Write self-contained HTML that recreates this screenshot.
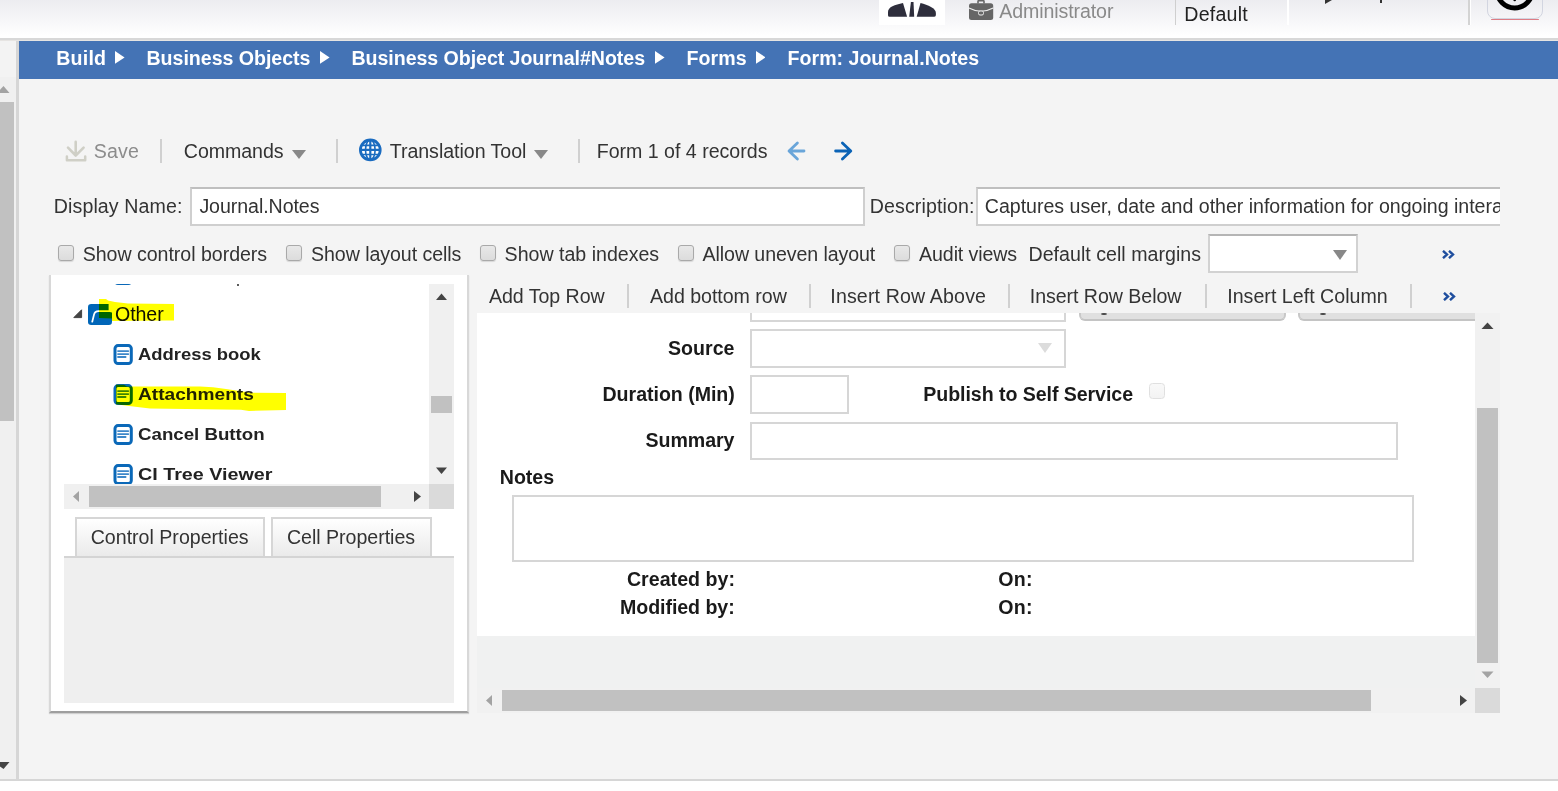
<!DOCTYPE html>
<html><head><meta charset="utf-8"><style>
html,body{margin:0;padding:0;}
body{width:1558px;height:791px;position:relative;overflow:hidden;background:#fff;font-family:"Liberation Sans",sans-serif;}
body div, body svg{position:absolute;}
.t{white-space:nowrap;}
</style></head><body>
<div style="left:0px;top:0px;width:1558px;height:38px;background:linear-gradient(#ececf0,#ffffff 95%)"></div>
<div style="left:0px;top:38px;width:1558px;height:2px;background:#d8d8d8"></div>
<div style="left:0px;top:40px;width:1558px;height:1px;background:#e6e4e2"></div>
<div style="left:879px;top:0px;width:66px;height:25px;background:#fff"></div>
<svg style="left:886px;top:0px" width="52" height="20" viewBox="0 0 52 20"><path d="M2 15.2 Q2 16.7 3.5 16.7 L21.1 16.7 L17 2.9 C9 5 2 6.5 2 12 Z" fill="#2e2e3c"/><path d="M23.2 16.7 L28.2 16.7 L27.5 2 L24.9 2 Z" fill="#2e2e3c"/><path d="M30.7 16.7 L48.3 16.7 Q49.9 16.7 49.9 15 L49.9 13 C49.9 8 42 5 34.5 2.9 Z" fill="#2e2e3c"/></svg>
<svg style="left:968px;top:0px" width="26" height="21" viewBox="0 0 26 21"><path d="M10 3.6 V1.6 Q10 0.6 11 0.6 H15 Q16 0.6 16 1.6 V3.6" fill="none" stroke="#666" stroke-width="1.6"/><rect x="1" y="3.3" width="24.2" height="16.7" rx="2.5" fill="#666"/><path d="M1 8 Q13 14.5 25.2 8" fill="none" stroke="#eee" stroke-width="1.1"/><rect x="10.5" y="11" width="5" height="4" rx="1.5" fill="#666" stroke="#eee" stroke-width="1"/></svg>
<div class="t" style="left:999.30px;top:2.00px;font-size:19.6px;line-height:19.6px;font-weight:400;color:#8a8a8a;letter-spacing:-0.108px;">Administrator</div>
<div style="left:1175px;top:0px;width:1px;height:25px;background:#cfcfcf"></div>
<div class="t" style="left:1184.30px;top:5.00px;font-size:19.6px;line-height:19.6px;font-weight:400;color:#222;letter-spacing:0.217px;">Default</div>
<div style="left:1287px;top:0px;width:2px;height:25px;background:#fff"></div>
<svg style="left:1325px;top:0px" width="10" height="5" viewBox="0 0 10 5"><path d="M0 0 L0 4 L7 0 Z" fill="#333"/></svg>
<div style="left:1380px;top:0px;width:2px;height:3px;background:#333"></div>
<div style="left:1468px;top:0px;width:2px;height:25px;background:#d3d3d3"></div>
<div style="left:1470px;top:0px;width:1px;height:25px;background:#fff"></div>
<div style="left:1487px;top:-10px;width:56px;height:29px;border:1.5px solid #d2d5e0;border-radius:8px;box-sizing:border-box;background:transparent"></div>
<div style="left:1491px;top:19px;width:48px;height:1px;background:#de7d85;border-radius:1px"></div>
<svg style="left:1494px;top:0px" width="42" height="14" viewBox="0 0 42 14"><circle cx="20.65" cy="-9.8" r="17.7" fill="none" stroke="#000" stroke-width="5"/><circle cx="20.7" cy="0" r="1.3" fill="#000"/></svg>
<div style="left:0px;top:41px;width:16px;height:738px;background:#f0f0f0"></div>
<div style="left:0px;top:41px;width:16px;height:36px;background:#f3f3f3"></div>
<svg style="left:0px;top:86px" width="10" height="7" viewBox="0 0 10 7"><path d="M-3 7 L3.5 0 L9.5 7 Z" fill="#a3a3a3"/></svg>
<div style="left:0px;top:102px;width:14px;height:319px;background:#c1c1c1"></div>
<svg style="left:0px;top:762px" width="10" height="8" viewBox="0 0 10 8"><path d="M-6 0 L9.5 0 L3.5 7 Z" fill="#444"/></svg>
<div style="left:16px;top:41px;width:3px;height:738px;background:#d6d6d6"></div>
<div style="left:19px;top:79px;width:1539px;height:700px;background:#f4f4f4"></div>
<div style="left:0px;top:779px;width:1558px;height:2px;background:#d6d6d6"></div>
<div style="left:0px;top:781px;width:1558px;height:10px;background:#fff"></div>
<div style="left:19px;top:41px;width:1539px;height:38px;background:#4473b5"></div>
<div class="t" style="left:56.30px;top:49.00px;font-size:19.6px;line-height:19.6px;font-weight:700;color:#fff;letter-spacing:0.175px;">Build</div>
<svg style="left:115px;top:51.3px" width="9.6" height="12.8" viewBox="0 0 9.6 12.8"><path d="M0 0 L9.6 6.4 L0 12.8 Z" fill="#fff"/></svg>
<div class="t" style="left:146.50px;top:49.00px;font-size:19.6px;line-height:19.6px;font-weight:700;color:#fff;letter-spacing:-0.033px;">Business Objects</div>
<svg style="left:320px;top:51.3px" width="9.6" height="12.8" viewBox="0 0 9.6 12.8"><path d="M0 0 L9.6 6.4 L0 12.8 Z" fill="#fff"/></svg>
<div class="t" style="left:351.50px;top:49.00px;font-size:19.6px;line-height:19.6px;font-weight:700;color:#fff;letter-spacing:-0.054px;">Business Object Journal#Notes</div>
<svg style="left:655px;top:51.3px" width="9.6" height="12.8" viewBox="0 0 9.6 12.8"><path d="M0 0 L9.6 6.4 L0 12.8 Z" fill="#fff"/></svg>
<div class="t" style="left:686.40px;top:49.00px;font-size:19.6px;line-height:19.6px;font-weight:700;color:#fff;letter-spacing:0.100px;">Forms</div>
<svg style="left:755.5px;top:51.3px" width="9.6" height="12.8" viewBox="0 0 9.6 12.8"><path d="M0 0 L9.6 6.4 L0 12.8 Z" fill="#fff"/></svg>
<div class="t" style="left:787.60px;top:49.00px;font-size:19.6px;line-height:19.6px;font-weight:700;color:#fff;letter-spacing:-0.006px;">Form: Journal.Notes</div>
<svg style="left:65px;top:140px" width="23" height="23" viewBox="0 0 23 23"><g fill="none" stroke="#cfcfc6" stroke-linecap="round" stroke-linejoin="round"><path d="M10.7 1.9 V15 M3 7.6 L10.7 15.5 L18.6 7.6" stroke-width="2.6"/><path d="M1.9 16.4 V20.2 H20.2 V16.4" stroke-width="2.5"/></g></svg>
<div class="t" style="left:93.70px;top:142.00px;font-size:19.6px;line-height:19.6px;font-weight:400;color:#8c8c8c;letter-spacing:0.167px;">Save</div>
<div style="left:160px;top:139px;width:2px;height:24px;background:#d0d0d0"></div>
<div class="t" style="left:183.80px;top:142.00px;font-size:19.6px;line-height:19.6px;font-weight:400;color:#333;letter-spacing:-0.057px;">Commands</div>
<svg style="left:291.5px;top:149.5px" width="14" height="9" viewBox="0 0 14 9"><path d="M0 0 L14 0 L7.0 9 Z" fill="#888"/></svg>
<div style="left:335.5px;top:139px;width:2.0px;height:24px;background:#d0d0d0"></div>
<svg style="left:358px;top:138px" width="25" height="25" viewBox="0 0 25 25"><circle cx="12.3" cy="11.9" r="9.5" fill="#fff"/><g fill="none" stroke="#1b6cc0"><circle cx="12.3" cy="11.9" r="9.9" stroke-width="2.8"/><path d="M12.3 2 V21.8 M2.4 11.9 H22.2" stroke-width="2.2"/><path d="M3 7.3 H21.6 M3 16.5 H21.6" stroke-width="1.7"/><ellipse cx="12.3" cy="11.9" rx="4.8" ry="10" stroke-width="1.6"/></g></svg>
<div class="t" style="left:389.70px;top:142.00px;font-size:19.6px;line-height:19.6px;font-weight:400;color:#333;letter-spacing:-0.033px;">Translation Tool</div>
<svg style="left:533.5px;top:149.5px" width="14" height="9" viewBox="0 0 14 9"><path d="M0 0 L14 0 L7.0 9 Z" fill="#888"/></svg>
<div style="left:577.5px;top:139px;width:2.0px;height:24px;background:#d0d0d0"></div>
<div class="t" style="left:596.70px;top:142.00px;font-size:19.6px;line-height:19.6px;font-weight:400;color:#333;letter-spacing:-0.011px;">Form 1 of 4 records</div>
<svg style="left:787px;top:141px" width="20" height="20" viewBox="0 0 20 20"><path d="M17 10 H2.2 M10.4 2 L2 10 L10.4 18" fill="none" stroke="#69a5d9" stroke-width="2.8" stroke-linecap="round" stroke-linejoin="round"/></svg>
<svg style="left:834px;top:141px" width="20" height="20" viewBox="0 0 20 20"><path d="M1.6 10 H16.6 M8.4 2 L16.8 10 L8.4 18" fill="none" stroke="#0b63b6" stroke-width="2.8" stroke-linecap="round" stroke-linejoin="round"/></svg>
<div class="t" style="left:53.80px;top:197.00px;font-size:19.6px;line-height:19.6px;font-weight:400;color:#333;letter-spacing:0.100px;">Display Name:</div>
<div style="left:190px;top:187px;width:675px;height:39px;background:#fff;border:2px solid #cfcfcf;border-top-color:#bfbfbf;box-sizing:border-box"></div>
<div class="t" style="left:199.40px;top:197.00px;font-size:19.6px;line-height:19.6px;font-weight:400;color:#333;letter-spacing:-0.067px;">Journal.Notes</div>
<div class="t" style="left:869.80px;top:197.00px;font-size:19.6px;line-height:19.6px;font-weight:400;color:#333;letter-spacing:0.100px;">Description:</div>
<div style="left:976px;top:187px;width:524px;height:39px;background:#fff;border:2px solid #cfcfcf;border-top-color:#bfbfbf;border-right:none;box-sizing:border-box;overflow:hidden">
<div class="t" style="left:6.80px;top:8.00px;font-size:19.6px;line-height:19.6px;font-weight:400;color:#333;letter-spacing:-0.026px;">Captures user, date and other information for ongoing interactions</div>
</div>
<div style="left:58px;top:245px;width:16px;height:16px;border:1px solid #a9a9a9;border-radius:3px;background:linear-gradient(#e8e8e8,#dcdcdc);box-shadow:0 1px 1px rgba(0,0,0,.12);box-sizing:border-box"></div>
<div class="t" style="left:82.70px;top:245.00px;font-size:19.6px;line-height:19.6px;font-weight:400;color:#333;letter-spacing:-0.037px;">Show control borders</div>
<div style="left:286.3px;top:245px;width:16.0px;height:16px;border:1px solid #a9a9a9;border-radius:3px;background:linear-gradient(#e8e8e8,#dcdcdc);box-shadow:0 1px 1px rgba(0,0,0,.12);box-sizing:border-box"></div>
<div class="t" style="left:311.00px;top:245.00px;font-size:19.6px;line-height:19.6px;font-weight:400;color:#333;letter-spacing:-0.062px;">Show layout cells</div>
<div style="left:480.2px;top:245px;width:16.0px;height:16px;border:1px solid #a9a9a9;border-radius:3px;background:linear-gradient(#e8e8e8,#dcdcdc);box-shadow:0 1px 1px rgba(0,0,0,.12);box-sizing:border-box"></div>
<div class="t" style="left:504.60px;top:245.00px;font-size:19.6px;line-height:19.6px;font-weight:400;color:#333;letter-spacing:-0.007px;">Show tab indexes</div>
<div style="left:677.5px;top:245px;width:16.0px;height:16px;border:1px solid #a9a9a9;border-radius:3px;background:linear-gradient(#e8e8e8,#dcdcdc);box-shadow:0 1px 1px rgba(0,0,0,.12);box-sizing:border-box"></div>
<div class="t" style="left:702.60px;top:245.00px;font-size:19.6px;line-height:19.6px;font-weight:400;color:#333;letter-spacing:-0.089px;">Allow uneven layout</div>
<div style="left:894.2px;top:245px;width:16.0px;height:16px;border:1px solid #a9a9a9;border-radius:3px;background:linear-gradient(#e8e8e8,#dcdcdc);box-shadow:0 1px 1px rgba(0,0,0,.12);box-sizing:border-box"></div>
<div class="t" style="left:919.10px;top:245.00px;font-size:19.6px;line-height:19.6px;font-weight:400;color:#333;letter-spacing:-0.110px;">Audit views</div>
<div class="t" style="left:1028.50px;top:245.00px;font-size:19.6px;line-height:19.6px;font-weight:400;color:#333;letter-spacing:0.026px;">Default cell margins</div>
<div style="left:1208px;top:234px;width:150px;height:39px;background:#fff;border:2px solid #d2d2d2;border-top-color:#b5b5b5;box-sizing:border-box"></div>
<svg style="left:1333.4px;top:250px" width="14" height="10" viewBox="0 0 14 10"><path d="M0 0 L14 0 L7.0 10 Z" fill="#888"/></svg>
<svg style="left:1442px;top:250px" width="13" height="9" viewBox="0 0 13 9"><path d="M1 0.8 L5 4.5 L1 8.2 M7 0.8 L11 4.5 L7 8.2" fill="none" stroke="#1f4e9e" stroke-width="2.4"/></svg>
<div style="left:49px;top:275px;width:420px;height:438px;background:#fff;border-left:2px solid #d8d8d8;border-right:2px solid #d8d8d8;border-bottom:2px solid #9e9e9e;box-shadow:0 1px 1px rgba(0,0,0,.15);box-sizing:border-box"></div>
<div style="left:64px;top:284px;width:365px;height:200px;overflow:hidden;background:#fff">
<svg style="left:49.0px;top:-19.69999999999999px" width="21" height="22" viewBox="0 0 21 22"><rect x="2" y="1.6" width="16.3" height="17.9" rx="3" fill="#fff" stroke="#0a68b8" stroke-width="3"/><path d="M5 7.1 H15.3 M5 10.1 H15.3 M5 13 H12.6" stroke="#3d87c9" stroke-width="1.8" stroke-linecap="round"/></svg>
<div style="left:172.8px;top:0px;width:1.8px;height:1.5px;background:#333;border-radius:50%"></div>
<svg style="left:8px;top:24px" width="11" height="11" viewBox="0 0 11 11"><path d="M1.8 9.6 L9.6 1.8 L9.6 9.6 Z" fill="#454545" stroke="#454545" stroke-width="1" stroke-linejoin="round"/></svg>
<svg style="left:24px;top:20px" width="25" height="22" viewBox="0 0 25 22"><rect x="0" y="0" width="24" height="21" rx="3.2" fill="#0066b8"/><path d="M20.6 -1 H25 V11 Q25 7.9 21.6 7.9 H20.6 Z" fill="#fff"/><path d="M4.1 18.4 L6 10.6 Q6.9 7.1 10.5 7.1 H25" fill="none" stroke="#fff" stroke-width="1.8"/></svg>
<svg style="left:-64px;top:-284px;mix-blend-mode:multiply" width="400" height="500" viewBox="0 0 400 500"><path d="M99 299 L106 299 L108 300.4 L115 302 L128 303.5 L174 304 L174 320.5 L167 320.5 L112 321 L112 318.4 L99 318 Z" fill="#ffff00"/></svg>
<div class="t" style="left:51.00px;top:21.00px;font-size:19.6px;line-height:19.6px;font-weight:400;color:#111;letter-spacing:-0.075px;mix-blend-mode:multiply">Other</div>
<svg style="left:49.0px;top:60px" width="21" height="22" viewBox="0 0 21 22"><rect x="2" y="1.6" width="16.3" height="17.9" rx="3" fill="#fff" stroke="#0a68b8" stroke-width="3"/><path d="M5 7.1 H15.3 M5 10.1 H15.3 M5 13 H12.6" stroke="#3d87c9" stroke-width="1.8" stroke-linecap="round"/></svg>
<div class="t" style="left:74.12px;top:62.00px;font-size:17px;line-height:17px;font-weight:700;color:#222;transform:scaleX(1.0830);transform-origin:0 0;">Address book</div>
<svg style="left:49.0px;top:100px" width="21" height="22" viewBox="0 0 21 22"><rect x="2" y="1.6" width="16.3" height="17.9" rx="3" fill="#fff" stroke="#0a68b8" stroke-width="3"/><path d="M5 7.1 H15.3 M5 10.1 H15.3 M5 13 H12.6" stroke="#3d87c9" stroke-width="1.8" stroke-linecap="round"/></svg>
<div class="t" style="left:74.08px;top:102.00px;font-size:17px;line-height:17px;font-weight:700;color:#222;transform:scaleX(1.1248);transform-origin:0 0;">Attachments</div>
<svg style="left:49.0px;top:140px" width="21" height="22" viewBox="0 0 21 22"><rect x="2" y="1.6" width="16.3" height="17.9" rx="3" fill="#fff" stroke="#0a68b8" stroke-width="3"/><path d="M5 7.1 H15.3 M5 10.1 H15.3 M5 13 H12.6" stroke="#3d87c9" stroke-width="1.8" stroke-linecap="round"/></svg>
<div class="t" style="left:74.10px;top:142.00px;font-size:17px;line-height:17px;font-weight:700;color:#222;transform:scaleX(1.0991);transform-origin:0 0;">Cancel Button</div>
<svg style="left:49.0px;top:180px" width="21" height="22" viewBox="0 0 21 22"><rect x="2" y="1.6" width="16.3" height="17.9" rx="3" fill="#fff" stroke="#0a68b8" stroke-width="3"/><path d="M5 7.1 H15.3 M5 10.1 H15.3 M5 13 H12.6" stroke="#3d87c9" stroke-width="1.8" stroke-linecap="round"/></svg>
<div class="t" style="left:74.04px;top:182.00px;font-size:17px;line-height:17px;font-weight:700;color:#222;transform:scaleX(1.1600);transform-origin:0 0;">CI Tree Viewer</div>
<svg style="left:-64px;top:-284px;mix-blend-mode:multiply" width="400" height="500" viewBox="0 0 400 500"><path d="M116 384.8 L124 384.8 L127 386.6 L200 386.6 L213 387.2 L226 389 L251 392.7 L286 393 L286 410 L249 411 L241 409.8 L150 408.5 L129 406 L116 404.3 Z" fill="#ffff00"/></svg>
</div>
<div style="left:429px;top:284px;width:25px;height:200px;background:#f0f0f0"></div>
<svg style="left:436px;top:293px" width="12" height="8" viewBox="0 0 12 8"><path d="M0 7 L5.5 0.5 L11 7 Z" fill="#444"/></svg>
<div style="left:431px;top:396px;width:21px;height:17px;background:#c1c1c1"></div>
<svg style="left:436px;top:467px" width="12" height="8" viewBox="0 0 12 8"><path d="M0 0.5 L11 0.5 L5.5 7 Z" fill="#444"/></svg>
<div style="left:64px;top:484px;width:365px;height:25px;background:#f0f0f0"></div>
<svg style="left:72px;top:490px" width="8" height="13" viewBox="0 0 8 13"><path d="M7 1 L7 12 L1 6.5 Z" fill="#a3a3a3"/></svg>
<div style="left:89px;top:486px;width:292px;height:21px;background:#c1c1c1"></div>
<svg style="left:413px;top:490px" width="9" height="13" viewBox="0 0 9 13"><path d="M1 1 L1 12 L8 6.5 Z" fill="#444"/></svg>
<div style="left:429px;top:484px;width:25px;height:25px;background:#dadada"></div>
<div style="left:75px;top:517px;width:190px;height:41px;border:2px solid #d6d6d6;border-bottom:none;background:linear-gradient(#ffffff,#e9e9e9);box-sizing:border-box"></div>
<div class="t" style="left:90.70px;top:528.00px;font-size:19.6px;line-height:19.6px;font-weight:400;color:#333;">Control Properties</div>
<div style="left:271px;top:517px;width:161px;height:41px;border:2px solid #d6d6d6;border-bottom:none;background:linear-gradient(#ffffff,#e9e9e9);box-sizing:border-box"></div>
<div class="t" style="left:287.00px;top:528.00px;font-size:19.6px;line-height:19.6px;font-weight:400;color:#333;letter-spacing:-0.029px;">Cell Properties</div>
<div style="left:64px;top:556px;width:390px;height:2px;background:#d4d4d4"></div>
<div style="left:64px;top:558px;width:390px;height:145px;background:#efefef"></div>
<div class="t" style="left:488.90px;top:287.00px;font-size:19.6px;line-height:19.6px;font-weight:400;color:#333;letter-spacing:-0.040px;">Add Top Row</div>
<div class="t" style="left:650.00px;top:287.00px;font-size:19.6px;line-height:19.6px;font-weight:400;color:#333;letter-spacing:-0.031px;">Add bottom row</div>
<div class="t" style="left:830.30px;top:287.00px;font-size:19.6px;line-height:19.6px;font-weight:400;color:#333;letter-spacing:0.140px;">Insert Row Above</div>
<div class="t" style="left:1029.80px;top:287.00px;font-size:19.6px;line-height:19.6px;font-weight:400;color:#333;letter-spacing:-0.053px;">Insert Row Below</div>
<div class="t" style="left:1227.20px;top:287.00px;font-size:19.6px;line-height:19.6px;font-weight:400;color:#333;letter-spacing:0.029px;">Insert Left Column</div>
<div style="left:626.5px;top:284px;width:2.0px;height:24px;background:#d0d0d0"></div>
<div style="left:808.5px;top:284px;width:2.0px;height:24px;background:#d0d0d0"></div>
<div style="left:1007.5px;top:284px;width:2.0px;height:24px;background:#d0d0d0"></div>
<div style="left:1204.5px;top:284px;width:2.0px;height:24px;background:#d0d0d0"></div>
<div style="left:1409.5px;top:284px;width:2.0px;height:24px;background:#d0d0d0"></div>
<svg style="left:1443px;top:292px" width="13" height="9" viewBox="0 0 13 9"><path d="M1 0.8 L5 4.5 L1 8.2 M7 0.8 L11 4.5 L7 8.2" fill="none" stroke="#1f4e9e" stroke-width="2.4"/></svg>
<div style="left:477px;top:313px;width:1023px;height:400px;background:#f0f1f1"></div>
<div style="left:477px;top:313px;width:998px;height:323px;background:#fff"></div>
<div style="left:477px;top:313px;width:998px;height:323px;overflow:hidden">
<div style="left:273px;top:-23px;width:316px;height:32px;border:2px solid #d6d6d6;box-sizing:border-box;background:#fff"></div>
<div style="left:602px;top:-23px;width:207px;height:31px;background:#e0e0e0;border-bottom:2px solid #c4c4c4;border-left:2px solid #c8c8c8;border-right:2px solid #c8c8c8;border-radius:0 0 6px 6px;box-sizing:border-box"></div>
<div style="left:624px;top:0px;width:6px;height:2px;background:#444;border-radius:50%"></div>
<div style="left:821px;top:-23px;width:202px;height:31px;background:#e0e0e0;border-bottom:2px solid #c4c4c4;border-left:2px solid #c8c8c8;border-radius:0 0 6px 6px;box-sizing:border-box"></div>
<div style="left:843px;top:0px;width:6px;height:2px;background:#444;border-radius:50%"></div>
</div>
<div class="t" style="left:668.00px;top:339.00px;font-size:19.6px;line-height:19.6px;font-weight:700;color:#1a1a1a;">Source</div>
<div style="left:750px;top:329px;width:316px;height:39px;border:2px solid #d6d6d6;box-sizing:border-box;background:#fff"></div>
<svg style="left:1037.5px;top:343px" width="14" height="10" viewBox="0 0 14 10"><path d="M0 0 L14 0 L7.0 10 Z" fill="#dcdcdc"/></svg>
<div class="t" style="left:602.50px;top:385.00px;font-size:19.6px;line-height:19.6px;font-weight:700;color:#1a1a1a;letter-spacing:-0.038px;">Duration (Min)</div>
<div style="left:750px;top:375px;width:99px;height:39px;border:2px solid #d6d6d6;box-sizing:border-box;background:#fff"></div>
<div class="t" style="left:923.30px;top:385.00px;font-size:19.6px;line-height:19.6px;font-weight:700;color:#1a1a1a;letter-spacing:-0.068px;">Publish to Self Service</div>
<div style="left:1149px;top:383.2px;width:16px;height:16.0px;border:1.2px solid #e0e0e0;border-radius:3.5px;background:linear-gradient(#f9f9f9,#f3f3f3);box-sizing:border-box"></div>
<div class="t" style="left:645.60px;top:431.00px;font-size:19.6px;line-height:19.6px;font-weight:700;color:#1a1a1a;letter-spacing:-0.067px;">Summary</div>
<div style="left:750px;top:421.5px;width:648px;height:38.5px;border:2px solid #d6d6d6;box-sizing:border-box;background:#fff"></div>
<div class="t" style="left:499.80px;top:468.00px;font-size:19.6px;line-height:19.6px;font-weight:700;color:#1a1a1a;letter-spacing:-0.050px;">Notes</div>
<div style="left:512px;top:495px;width:902px;height:67px;border:2px solid #d6d6d6;box-sizing:border-box;background:#fff"></div>
<div class="t" style="left:626.90px;top:570.00px;font-size:19.6px;line-height:19.6px;font-weight:700;color:#1a1a1a;letter-spacing:0.040px;">Created by:</div>
<div class="t" style="left:620.00px;top:598.00px;font-size:19.6px;line-height:19.6px;font-weight:700;color:#1a1a1a;letter-spacing:-0.064px;">Modified by:</div>
<div class="t" style="left:998.30px;top:570.00px;font-size:19.6px;line-height:19.6px;font-weight:700;color:#1a1a1a;letter-spacing:0.300px;">On:</div>
<div class="t" style="left:998.30px;top:598.00px;font-size:19.6px;line-height:19.6px;font-weight:700;color:#1a1a1a;letter-spacing:0.300px;">On:</div>
<div style="left:1475px;top:313px;width:25px;height:375px;background:#f1f1f1"></div>
<svg style="left:1481px;top:322px" width="13" height="8" viewBox="0 0 13 8"><path d="M0.5 7 L6.5 0.5 L12.5 7 Z" fill="#444"/></svg>
<div style="left:1477px;top:408px;width:21px;height:255px;background:#c1c1c1"></div>
<svg style="left:1481px;top:671px" width="13" height="8" viewBox="0 0 13 8"><path d="M0.5 0.5 L12.5 0.5 L6.5 7 Z" fill="#a3a3a3"/></svg>
<div style="left:477px;top:688px;width:998px;height:25px;background:#f1f1f1"></div>
<svg style="left:485px;top:694px" width="8" height="13" viewBox="0 0 8 13"><path d="M7 1 L7 12 L1 6.5 Z" fill="#a3a3a3"/></svg>
<div style="left:502px;top:690px;width:869px;height:21px;background:#c1c1c1"></div>
<svg style="left:1459px;top:694px" width="9" height="13" viewBox="0 0 9 13"><path d="M1 1 L1 12 L8 6.5 Z" fill="#444"/></svg>
<div style="left:1475px;top:688px;width:25px;height:25px;background:#dadada"></div>
</body></html>
